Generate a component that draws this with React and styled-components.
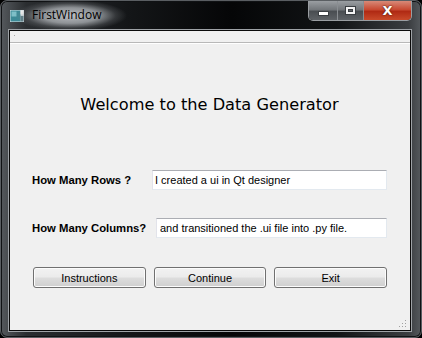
import styled, { createGlobalStyle } from "styled-components"

const GlobalStyle = createGlobalStyle`
  html, body {
    margin: 0;
    padding: 0;
    background: #000;
  }
  * {
    box-sizing: border-box;
  }
`

export default function App() {
  return (
    <>
      <GlobalStyle />
      <SCWindow>
        <SCTitleBar>
          <SCAppIcon width="14" height="12" viewBox="0 0 14 12">
            <rect x="0" y="0" width="14" height="12" fill="#d8e4e8" />
            <rect x="0.5" y="0.5" width="10" height="11" fill="#3c8a96" />
            <rect x="1.5" y="1.5" width="5" height="5" fill="#7fc0c8" />
            <rect x="10.5" y="0.5" width="3" height="4" fill="#ffffff" />
            <rect x="10.5" y="6" width="3" height="5.5" fill="#5a7f88" />
          </SCAppIcon>
          <SCCaption>FirstWindow</SCCaption>
          <SCCaptionButtons>
            <SCCaptionButton $w={28}>
              <SCMinGlyph />
            </SCCaptionButton>
            <SCCaptionButton $w={26}>
              <SCMaxGlyph />
            </SCCaptionButton>
            <SCCaptionButton $w={48} $close>
              <SCCloseGlyph>X</SCCloseGlyph>
            </SCCaptionButton>
          </SCCaptionButtons>
        </SCTitleBar>

        <SCClient>
          <SCMenuBar>
            <SCMenuDot />
          </SCMenuBar>
          <SCContent>
            <SCHeading>Welcome to the Data Generator</SCHeading>

            <SCFormRow $top={55}>
              <SCLabel $w={120}>How Many Rows ?</SCLabel>
              <SCLineEdit defaultValue="I created a ui in Qt designer" $pad={2} />
            </SCFormRow>

            <SCFormRow $top={28}>
              <SCLabel $w={124}>How Many Columns?</SCLabel>
              <SCLineEdit defaultValue="and transitioned the .ui file into .py file." $pad={3} />
            </SCFormRow>

            <SCButtonRow>
              <SCPushButton>Instructions</SCPushButton>
              <SCPushButton>Continue</SCPushButton>
              <SCPushButton>Exit</SCPushButton>
            </SCButtonRow>
          </SCContent>
          <SCGrip viewBox="0 0 8 8" width="8" height="8">
            <rect x="6" y="0" width="1" height="1" fill="#a0a0a0" />
            <rect x="3" y="3" width="1" height="1" fill="#a0a0a0" />
            <rect x="6" y="3" width="1" height="1" fill="#a0a0a0" />
            <rect x="0" y="6" width="1" height="1" fill="#a0a0a0" />
            <rect x="3" y="6" width="1" height="1" fill="#a0a0a0" />
            <rect x="6" y="6" width="1" height="1" fill="#a0a0a0" />
          </SCGrip>
        </SCClient>
      </SCWindow>
    </>
  )
}

const SCWindow = styled.div`
  width: 422px;
  height: 338px;

  display: flex;
  flex-direction: column;

  border-radius: 7px;
  border: 1px solid #5a5e62;
  box-shadow: inset 0 0 0 1px #101214;

  background: linear-gradient(to right, #55595d 0%, #2a2d30 6%, #141618 30%, #050607 55%, #121416 80%, #3a3d40 97%, #55595d 100%);
  overflow: hidden;
`

const SCTitleBar = styled.div`
  height: 29px;
  flex-shrink: 0;

  display: flex;
  align-items: flex-start;

  padding-left: 9px;
`

const SCAppIcon = styled.svg`
  margin-top: 9px;
  flex-shrink: 0;
`

const SCCaption = styled.span`
  margin-left: -10px;
  margin-top: -1px;
  padding: 7px 26px 8px 18px;

  font-family: "Open Sans", "Noto Sans", sans-serif;
  font-size: 12px;
  line-height: 16px;
  color: #000;

  background: radial-gradient(closest-side, rgba(196, 199, 202, 0.95) 0%, rgba(170, 174, 178, 0.8) 50%, rgba(120, 124, 128, 0.3) 80%, rgba(120, 124, 128, 0) 100%);
`

const SCCaptionButtons = styled.div`
  margin-left: auto;
  margin-right: 9px;

  display: flex;
  height: 20px;

  border: 1px solid #9a9ea2;
  border-top: none;
  border-radius: 0 0 5px 5px;
  overflow: hidden;
`

const SCCaptionButton = styled.div`
  width: ${(p) => p.$w}px;
  height: 100%;

  display: flex;
  align-items: center;
  justify-content: center;

  border-left: 1px solid #8a8e92;
  &:first-child {
    border-left: none;
  }

  background: ${(p) =>
    p.$close
      ? "linear-gradient(to bottom, #d88a78 0%, #c84a32 45%, #b02a14 55%, #c94a2a 100%)"
      : "linear-gradient(to bottom, #9a9ea2 0%, #73777b 45%, #4a4e52 55%, #5e6266 100%)"};
`

const SCMinGlyph = styled.div`
  width: 9px;
  height: 3px;
  margin-top: 6px;
  background: #fff;
  box-shadow: 0 0 0 1px #3a3e42;
`

const SCMaxGlyph = styled.div`
  width: 9px;
  height: 7px;
  border: 2px solid #f4f4f4;
  border-top-width: 2px;
  box-shadow: 0 0 0 1px #3a3e42, inset 0 0 0 1px #3a3e42;
`

const SCCloseGlyph = styled.span`
  font-family: "DejaVu Sans", sans-serif;
  font-weight: bold;
  font-size: 13px;
  line-height: 13px;
  color: #fff;
  text-shadow: 0 0 1px #5a1a10, 0 0 2px #5a1a10;
`

const SCClient = styled.div`
  flex: 1;
  position: relative;

  margin: 0 10px 6px 8px;

  display: flex;
  flex-direction: column;

  background: #f0f0f0;
  border: 1px solid #0a0a0a;
  box-shadow: 0 0 0 1px #9ea2a6;
`

const SCMenuBar = styled.div`
  height: 12px;
  flex-shrink: 0;
  position: relative;

  border-bottom: 1px solid #b8b8b8;
  box-shadow: 0 1px 0 #ffffff;
`

const SCMenuDot = styled.span`
  position: absolute;
  left: 4px;
  top: 4px;
  width: 1px;
  height: 1px;
  background: #a8a8a8;
`

const SCContent = styled.div`
  flex: 1;

  display: flex;
  flex-direction: column;

  padding: 0 23px 0 22px;

  font-family: "Liberation Sans", Arial, sans-serif;
  font-size: 11px;
  color: #000;
`

const SCHeading = styled.h1`
  margin: 52px 0 0 0;

  font-family: "DejaVu Sans", Tahoma, sans-serif;
  font-weight: normal;
  font-size: 16.2px;
  line-height: 20px;
  text-align: center;
  color: #000;
`

const SCFormRow = styled.div`
  margin-top: ${(p) => p.$top}px;

  display: flex;
  align-items: center;
  height: 20px;
`

const SCLabel = styled.label`
  width: ${(p) => p.$w}px;
  flex-shrink: 0;

  font-weight: bold;
  font-size: 11.3px;
  white-space: nowrap;
`

const SCLineEdit = styled.input`
  flex: 1;
  min-width: 0;
  height: 20px;

  padding: 0 0 0 ${(p) => p.$pad}px;

  font-family: "Liberation Sans", Arial, sans-serif;
  font-size: 11px;
  color: #000;

  background: #fff;
  border: 1px solid #e3e9ef;
  border-top-color: #abadb3;
  border-left-color: #e2e3ea;
  outline: none;
`

const SCButtonRow = styled.div`
  margin-top: 29px;

  display: grid;
  grid-template-columns: 1fr 1fr 1fr;
  gap: 8px;

  padding-left: 1px;
`

const SCPushButton = styled.button`
  height: 21px;
  padding: 0;

  font-family: "Liberation Sans", Arial, sans-serif;
  font-size: 11px;
  color: #000;

  border: 1px solid #707070;
  border-radius: 3px;
  background: linear-gradient(to bottom, #f2f2f2 0%, #ebebeb 48%, #dddddd 52%, #cfcfcf 100%);
  box-shadow: inset 0 0 0 1px #fcfcfc;
`

const SCGrip = styled.svg`
  position: absolute;
  right: 3px;
  bottom: 2px;
`
